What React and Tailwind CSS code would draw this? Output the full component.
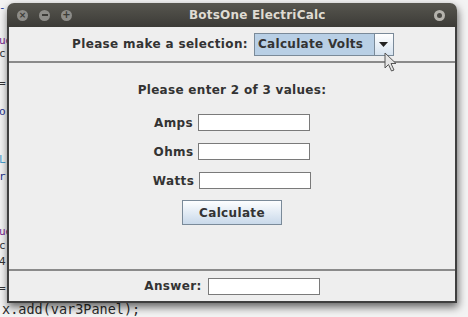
import React from 'react';

const font = { fontFamily: '"DejaVu Sans", "Liberation Sans", sans-serif' };

// bits of the editor that sits behind the dialog
const codeBits = [
    { top: 2, text: '-', color: 'text-[#2a3ea0]' },
    { top: 35, text: 'ue', color: 'text-[#7a1f8f]' },
    { top: 48, text: 'c(', color: 'text-[#333333]' },
    { top: 78, text: '=', color: 'text-[#333333]' },
    { top: 106, text: 'o)', color: 'text-[#1d2f8a]' },
    { top: 154, text: 'L', color: 'text-[#4aa0d0]' },
    { top: 171, text: 'r', color: 'text-[#1d2f8a]' },
    { top: 226, text: 'ue', color: 'text-[#7a1f8f]' },
    { top: 240, text: 'c(', color: 'text-[#333333]' },
    { top: 256, text: '4', color: 'text-[#333333]' },
    { top: 283, text: '=', color: 'text-[#333333]' },
];

const TitleButton = ({ children }) => (
    <div className="w-[11px] h-[11px] rounded-full bg-[#8d8c88] flex items-center justify-center">
        {children}
    </div>
);

const Field = ({ label }) => (
    <div className="flex items-center gap-[5px] h-[17px]">
        <span className="text-[12px] font-bold tracking-[0.35px] text-[#333333] leading-none">{label}</span>
        <div className="w-[112px] h-[17px] bg-white border border-[#7a7a7a]" />
    </div>
);

const App = () => {
    return (
        <div className="relative w-[468px] h-[317px] overflow-hidden bg-[#f3f3f3]">
            {/* Background editor */}
            {codeBits.map((b, i) => (
                <span
                    key={i}
                    className={`absolute left-[-1px] text-[11px] leading-[11px] ${b.color}`}
                    style={{ top: b.top, fontFamily: '"DejaVu Sans Mono", monospace' }}
                >
                    {b.text}
                </span>
            ))}
            <span
                className="absolute left-[2px] top-[303px] text-[13.5px] leading-[13px] text-[#2b2b2b] whitespace-pre"
                style={{ fontFamily: '"DejaVu Sans Mono", monospace' }}
            >
                x.add(var3Panel);
            </span>

            {/* Dialog window */}
            <div
                className="absolute left-[7px] top-[3px] w-[450px] h-[300px] flex flex-col rounded-t-[7px] shadow-[1px_4px_8px_rgba(0,0,0,0.6)]"
                style={font}
            >
                {/* Title bar */}
                <div className="h-[24px] shrink-0 flex items-center rounded-t-[7px] bg-gradient-to-b from-[#57564f] to-[#3c3b37] px-[10px]">
                    <div className="flex items-center gap-[11px]">
                        <TitleButton>
                            <span className="text-[9px] font-bold leading-none text-[#3c3b37]">×</span>
                        </TitleButton>
                        <TitleButton>
                            <div className="w-[6px] h-[2px] bg-[#3c3b37]" />
                        </TitleButton>
                        <TitleButton>
                            <span className="text-[10px] font-bold leading-none text-[#3c3b37]">+</span>
                        </TitleButton>
                    </div>
                    <span className="ml-[117px] text-[12px] font-bold tracking-[0.2px] text-[#dfdbd2] leading-none">
                        BotsOne ElectriCalc
                    </span>
                    <div className="ml-auto mr-[2px] w-[11px] h-[11px] rounded-full bg-[#b5b3ad] flex items-center justify-center">
                        <div className="w-[5px] h-[5px] rounded-full bg-[#4a4944]" />
                    </div>
                </div>

                {/* Body */}
                <div className="flex-1 flex flex-col bg-[#eeeeee] border-x-2 border-b-2 border-[#3f3f3f]">
                    {/* Selection row */}
                    <div className="h-[34px] shrink-0 flex items-center justify-center gap-[6px] pl-[2px]">
                        <span className="text-[12px] font-bold tracking-[0.35px] text-[#333333] leading-none">
                            Please make a selection:
                        </span>
                        <div className="flex h-[23px] border border-[#7a8a99] bg-[#b8cfe5]">
                            <div className="w-[119px] flex items-center px-[3px]">
                                <span className="text-[12px] font-bold tracking-[0.3px] text-[#333333] leading-none">
                                    Calculate Volts
                                </span>
                            </div>
                            <div className="w-[19px] flex items-center justify-center border-l border-[#7a8a99] bg-gradient-to-b from-[#ffffff] to-[#d6e3f0]">
                                <svg width="9" height="5" viewBox="0 0 9 5">
                                    <path d="M0 0 H9 L4.5 5 Z" fill="#222222" />
                                </svg>
                            </div>
                        </div>
                    </div>

                    <div className="h-[2px] shrink-0 bg-[#8a8a8a]" />

                    {/* Inputs */}
                    <div className="flex-1 flex flex-col items-center pt-[19px]">
                        <div className="h-[16px] flex items-center">
                            <span className="text-[12px] font-bold tracking-[0.3px] text-[#333333] leading-none">
                                Please enter 2 of 3 values:
                            </span>
                        </div>
                        <div className="flex flex-col items-center gap-[12px] mt-[16px]">
                            <Field label="Amps" />
                            <Field label="Ohms" />
                            <Field label="Watts" />
                        </div>
                        <button className="mt-[11px] w-[100px] h-[25px] border border-[#7a8a99] bg-gradient-to-b from-[#fdfeff] to-[#c9d9ea] text-[12px] font-bold tracking-[0.35px] text-[#333333] leading-none">
                            Calculate
                        </button>
                    </div>

                    <div className="h-[2px] shrink-0 bg-[#8a8a8a]" />

                    {/* Answer */}
                    <div className="h-[30px] shrink-0 flex items-center justify-center gap-[6px]">
                        <span className="text-[12px] font-bold tracking-[0.35px] text-[#333333] leading-none">Answer:</span>
                        <div className="w-[112px] h-[17px] bg-white border border-[#7a7a7a]" />
                    </div>
                </div>
            </div>

            {/* Mouse pointer */}
            <svg className="absolute left-[384px] top-[52px]" width="14" height="21" viewBox="0 0 14 21">
                <path
                    d="M1 1 L1 16 L4.5 12.5 L7.5 19 L10 18 L7 11.5 L12 11.5 Z"
                    fill="#e4e4e4"
                    stroke="#555555"
                    strokeWidth="1"
                    strokeLinejoin="round"
                />
            </svg>
        </div>
    );
};

export default App;
